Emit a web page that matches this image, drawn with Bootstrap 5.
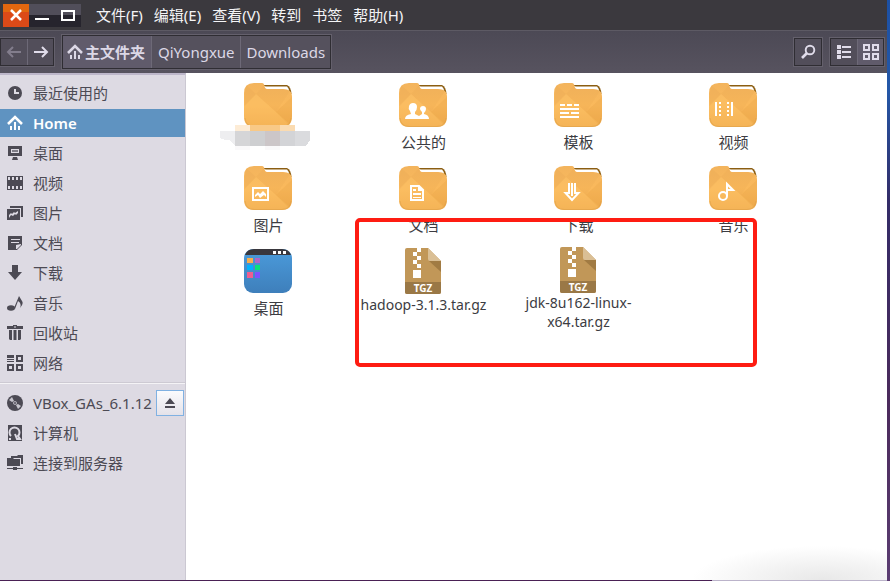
<!DOCTYPE html>
<html lang="zh-CN">
<head>
<meta charset="utf-8">
<meta name="viewport" content="width=device-width, initial-scale=1">
<title>Downloads</title>
<link href="https://cdn.jsdelivr.net/npm/bootstrap@5.3.0/dist/css/bootstrap.min.css" rel="stylesheet">
<style>
body{font-family:"Noto Sans","Noto Sans CJK SC",sans-serif;font-size:15px;line-height:20px;color:#3c3c42;background:linear-gradient(#1c50a4 0,#2458a8 90px,#332c68 200px,#4b2a5c 400px,#5b3d72 100%)}
svg{display:block;flex:none}
button{font-size:15px}
.file-window{margin-right:3px;background:#fff;position:relative}
.menu-strip{height:30px;background:#3b393e;padding-left:3px}
.win-btns{height:23px;background:linear-gradient(#514e5a 50%,#26242d 50%)}
.win-btn{width:26px;border:0;padding:0;background:none;color:#fff}
.win-close{background:linear-gradient(#e2670f 35%,#dc4a18 35%)}
.menu-links{gap:11px;margin-left:15px}
.menu-links a{color:#f4f4f6;text-decoration:none}
.tool-strip{height:43px;background:linear-gradient(#4c4955,#57535f);border-top:1px solid #5d5a64;padding-right:3px}
.tool-group{border:1px solid #2f2d33;outline:1px solid #64606c;height:28px}
.tool-btn{width:26px;border:0;padding:0;background:#524e5a;color:#e0dcea;display:flex;align-items:center;justify-content:center}
.tool-btn+.tool-btn,.path-btn+.path-btn{border-left:1px solid #6d6977}
.tool-btn:disabled{color:#827d8c}
.tool-btn.tool-on{background:#605b6b}
.path-group{height:34px;margin-left:8px}
.path-btn{border:0;padding:0 5px 0 6px;background:#55515d;color:#dcd8e6}
.path-btn.tool-on{background:#605b6b;padding:0 6px 0 4px;gap:2px}
.side-pane{width:186px;background:#dddae3;border-right:1px solid #cbc8d2;border-top:2px solid #bdb7ca;padding-top:4px}
.place-row{height:28px;margin-bottom:2px;padding-left:7px;gap:10px;color:#4c4a54;text-decoration:none;white-space:nowrap}
.place-on{background:#5f93c1;color:#fff;font-weight:600}
.place-cut{border-top:1px solid #cdcad3;border-bottom:1px solid #f4f3f6;margin:5px 0}
.volume-link{flex:1 1 0;min-width:0}
.eject-btn{flex:none;width:28px;height:26px;border:1px solid #80b1e2;background:linear-gradient(#fbfbfd,#e4e2e9);color:#4c4a54;padding:0 7px;margin-left:-10px;margin-right:1px}
.files-pane{padding:8px 0 0 4px;background:radial-gradient(ellipse 130px 34px at calc(100% - 65px) 100%,#e8e8e8 0,#f2f2f2 45%,#ffffff00 100%),#fff;overflow:hidden}
.file-grid{display:grid;grid-template-columns:repeat(auto-fill,155px);grid-auto-rows:83px}
.file-tile{color:#3c3c42;text-decoration:none;text-align:center;line-height:17px;display:flex;flex-direction:column;align-items:center;position:relative}
.tile-art{height:48px;display:flex;align-items:center}
.tile-name{margin-top:5px;padding-left:2px}
.archive-tile .tile-name{margin-top:0;max-width:142px;font-size:14px;line-height:19px}
.mosaic{position:absolute;left:30px;top:43px}
.bottom-edge{height:1px;background:linear-gradient(90deg,#4a2155 80.3%,#bbb3ca 80.3%)}
.red-frame{position:absolute;left:355px;top:218px;width:402px;height:149px;border:4px solid #fe1c12;border-radius:5px;pointer-events:none}
</style>
<script src="https://cdn.jsdelivr.net/npm/bootstrap@5.3.0/dist/js/bootstrap.bundle.min.js"></script>
</head>
<body>
<svg width="0" height="0" class="position-absolute" aria-hidden="true">
<defs>
<linearGradient id="gFolder" x2="0" y2="1"><stop stop-color="#f3b45d"/><stop offset=".5" stop-color="#fab95c"/><stop offset="1" stop-color="#f0ab4c"/></linearGradient>
<linearGradient id="gDesk" x2="0" y2="1"><stop stop-color="#4b9bdb"/><stop offset="1" stop-color="#3e7fbb"/></linearGradient>
</defs>
<symbol id="folder" viewBox="0 0 48 44">
<path d="M19 2H43Q47 4 47.500 11L30 10Z" fill="#8c5e12"/><path d="M20 3.500H43Q45 5 45 9L22 8Z" fill="#fff"/>
<path d="M0 10Q0 0 10 0H18Q20 0 20.500 3Q21 6 23 6H39Q48 6 48 13V33Q48 44 38 44H10Q0 44 0 33Z" fill="url(#gFolder)"/>
<path d="M12 11L1 23Q0 5 3 3Z" fill="#e9a956" opacity=".35"/><path d="M12 11L20 2Q21 6 23 6H39L46 8L32 29Z" fill="#e7a54f" opacity=".2"/><path d="M12 11L32 29L46 41Q43 44 38 44H10Q0 44 0 33V23Z" fill="#ffc66d" opacity=".32"/><path d="M32 29L48 14V33Q48 39 45 42Z" fill="#e59f42" opacity=".25"/>
<path d="M1 35Q2 43.500 10 43.500H38Q46 43.500 47 35" fill="none" stroke="#d99c46" opacity=".5"/>
</symbol>
<symbol id="tgz" viewBox="0 0 36 46">
<path d="M2 0H23L36 13V44Q36 46 34 46H2Q0 46 0 44V2Q0 0 2 0Z" fill="#c19758"/><path d="M23 0L36 13H25Q23 13 23 11Z" fill="#dabf95"/><path d="M24 13H36V24Z" fill="#a17b43"/><path d="M0 34H36V44Q36 46 34 46H2Q0 46 0 44Z" fill="#9a7846"/>
<path d="M12 0h4v4h-4zM8 4h4v4H8zM12 8h4v4h-4zM8 12h4v4H8zM12 16h4v4h-4zM8 22h8v8H8z" fill="#fff"/>
</symbol>
<symbol id="house" viewBox="0 0 16 16"><path d="M1 9L8 2L15 9" fill="none" stroke="currentColor" stroke-width="2.600"/><path d="M3 11h2v4H3zM7 7h2v8H7zM11 11h2v4h-2z" fill="currentColor"/></symbol>
</svg>

<div class="file-window d-flex flex-column min-vh-100">
<header class="menu-strip d-flex align-items-center">
<div class="win-btns d-flex">
<button class="win-btn win-close" aria-label="关闭"><svg width="26" height="22" viewBox="0 0 26 22"><path d="M8 6L18 16M18 6L8 16" stroke="#fff" stroke-width="2.500"/></svg></button>
<button class="win-btn" aria-label="最小化"><svg width="26" height="22"><path d="M6 15H20" stroke="#fff" stroke-width="2"/></svg></button>
<button class="win-btn" aria-label="最大化"><svg width="26" height="22"><path d="M7 7H19V16H7Z" fill="none" stroke="#fff" stroke-width="2"/></svg></button>
</div>
<nav class="menu-links d-flex"><a href="#">文件(F)</a><a href="#">编辑(E)</a><a href="#">查看(V)</a><a href="#">转到</a><a href="#">书签</a><a href="#">帮助(H)</a></nav>
</header>

<div class="tool-strip d-flex align-items-center">
<div class="tool-group d-flex">
<button class="tool-btn" disabled aria-label="后退"><svg width="16" height="16" viewBox="0 0 16 16"><path d="M15 8H2M7 3L2 8L7 13" fill="none" stroke="currentColor" stroke-width="2"/></svg></button>
<button class="tool-btn" aria-label="前进"><svg width="16" height="16" viewBox="0 0 16 16"><path d="M1 8H14M9 3L14 8L9 13" fill="none" stroke="currentColor" stroke-width="2"/></svg></button>
</div>
<div class="tool-group path-group d-flex">
<button class="path-btn tool-on d-flex align-items-center fw-bold"><svg width="16" height="16"><use href="#house"/></svg>主文件夹</button>
<button class="path-btn">QiYongxue</button>
<button class="path-btn">Downloads</button>
</div>
<div class="tool-group d-flex ms-auto me-2"><button class="tool-btn" aria-label="搜索"><svg width="16" height="16" viewBox="0 0 16 16"><circle cx="10" cy="6" r="4.300" fill="none" stroke="currentColor" stroke-width="1.900"/><path d="M7 9L2 14" stroke="currentColor" stroke-width="2.600"/></svg></button></div>
<div class="tool-group d-flex">
<button class="tool-btn" aria-label="列表视图"><svg width="16" height="16" viewBox="0 0 16 16" fill="currentColor"><path d="M1 1h4v4H1zM1 6h4v4H1zM1 11h4v4H1zM6 2h9v2H6zM6 7h9v2H6zM6 12h9v2H6z"/></svg></button>
<button class="tool-btn tool-on" aria-label="图标视图"><svg width="16" height="16" fill="none" stroke="currentColor" stroke-width="2"><path d="M1 1h5v5H1zM10 1h5v5h-5zM1 10h5v5H1zM10 10h5v5h-5z"/></svg></button>
</div>
</div>

<main class="d-flex flex-grow-1">
<aside class="side-pane flex-shrink-0">
<a href="#" class="place-row d-flex align-items-center"><svg width="16" height="16"><circle cx="8" cy="8" r="7" fill="currentColor"/><path d="M8 4V8H12" fill="none" stroke="#dddae3" stroke-width="2"/></svg>最近使用的</a>
<a href="#" class="place-row place-on d-flex align-items-center"><svg width="16" height="16"><use href="#house"/></svg>Home</a>
<a href="#" class="place-row d-flex align-items-center"><svg width="16" height="16" fill="currentColor"><path fill-rule="evenodd" d="M1 1H15V11H1ZM4 4V8H12V4ZM6 12H10L11 15H5Z"/><path d="M5 5h6v2H5z" opacity=".65"/></svg>桌面</a>
<a href="#" class="place-row d-flex align-items-center"><svg width="16" height="16"><path d="M0 1H16V15H0Z" fill="currentColor"/><path d="M1 2h2v3H1zM5 2h2v3H5zM9 2h2v3H9zM13 2h2v3h-2zM1 11h2v3H1zM5 11h2v3H5zM9 11h2v3H9zM13 11h2v3h-2z" fill="#dddae3"/></svg>视频</a>
<a href="#" class="place-row d-flex align-items-center"><svg width="16" height="16"><path d="M3 1H16V12H14V3H3Z" fill="currentColor"/><path d="M0 4H13V15H0Z" fill="currentColor"/><path d="M2 13V10L4 8L5 9L7 7L8 8L11 6V8L9 10L8 9L6 11L4 10Z" fill="#dddae3"/></svg>图片</a>
<a href="#" class="place-row d-flex align-items-center"><svg width="16" height="16"><path d="M1 1H15V10L10 15H1Z" fill="currentColor"/><path d="M4 4h9v1H4zM4 7h8v1H4zM9 14V10L14 9V10L10 14Z" fill="#dddae3"/></svg>文档</a>
<a href="#" class="place-row d-flex align-items-center"><svg width="16" height="16"><path d="M5 0H11V7H15L8 15L1 7H5Z" fill="currentColor"/></svg>下载</a>
<a href="#" class="place-row d-flex align-items-center"><svg width="16" height="16"><ellipse cx="4" cy="13" rx="4" ry="2.800" fill="currentColor"/><path d="M7 13L12 1L15 6Q17 9 13 13Q15 8 11 6L8 14Z" fill="currentColor"/></svg>音乐</a>
<a href="#" class="place-row d-flex align-items-center"><svg width="16" height="16" fill="currentColor"><path fill-rule="evenodd" d="M0 1H6V0H10V1H16V4H0ZM7 1.500V2.500H9V1.500ZM2 5h3v10H3L2 14ZM6.500 5h3v10h-3zM11 5h3v9l-1 1h-2z"/></svg>回收站</a>
<a href="#" class="place-row d-flex align-items-center"><svg width="16" height="16" fill="currentColor"><path fill-rule="evenodd" d="M0 0h7v3H0zM0 4h7v1H0zM0 6h7v1H0zM9 0h7v7H9zM11 2v3h3V2zM0 9h7v7H0zM2 11v3h3v-3zM9 9h7v7H9zM11 11v3h3v-3z"/></svg>网络</a>
<div class="place-cut"></div>
<div class="place-row d-flex align-items-center"><svg width="16" height="16"><circle cx="8" cy="8" r="8" fill="currentColor"/><path d="M2 5L5 2L7 6L5 7ZM14 11L11 14L9 10L11 9Z" fill="#dddae3" opacity=".85"/><circle cx="8" cy="8" r="1.800" fill="#dddae3"/><circle cx="8" cy="8" r="1" fill="currentColor"/></svg><a href="#" class="volume-link text-reset text-decoration-none">VBox_GAs_6.1.12</a><button class="eject-btn" aria-label="弹出"><svg width="12" height="12" viewBox="0 0 12 12" fill="currentColor"><path d="M6 1L11 7H1ZM1 9h10v2H1z"/></svg></button></div>
<a href="#" class="place-row d-flex align-items-center"><svg width="16" height="16"><path d="M1 0H15V16H1Z" fill="currentColor"/><path d="M4 11A5 5 0 1 1 11 11L13 14H10L8 9" fill="none" stroke="#dddae3" stroke-width="2"/><path d="M2 13h2v2H2z" fill="#dddae3"/></svg>计算机</a>
<a href="#" class="place-row d-flex align-items-center"><svg width="16" height="16" fill="currentColor"><path d="M4 1H10L11 0H16V9H14V3H4ZM0 3H6L7 4H13V11H0ZM0 13H6V12H10V13H16V14H10V15H6V14H0Z"/></svg>连接到服务器</a>
</aside>

<section class="files-pane flex-grow-1">
<div class="file-grid">
<a href="#" class="file-tile" aria-label="文件夹"><span class="tile-art"><svg width="48" height="44"><use href="#folder"/></svg></span>
<svg class="mosaic" width="90" height="26" shape-rendering="crispEdges"><path d="M15 1h15v6H15z" fill="#fdecd6"/><path d="M30 1h30v6H30z" fill="#f8c987"/><path d="M60 1h15v6H60z" fill="#fadbb1"/><path d="M0 7h15v15L10 16H5L0 14z" fill="#eeeef0"/><path d="M15 7h15v15H15z" fill="#d5d5d7"/><path d="M30 7h15v15H30z" fill="#cecfd1"/><path d="M45 7h15v15H45z" fill="#ccc6c8"/><path d="M60 7h15v15H60z" fill="#d3d4d7"/><path d="M75 7h15v9l-4 6H75z" fill="#dadbde"/><path d="M15 22h15v4H15zM45 22h15v4H45z" fill="#faf9fa"/></svg></a>
<a href="#" class="file-tile"><span class="tile-art"><svg width="48" height="44"><use href="#folder"/><path d="M6 36Q6 32 12 31L11 28Q9 26 10 23Q11 20 14 20Q18 20 18 24Q18 27 16 29V31L20 33L23 31V29Q21 27 21 26Q21 23 24 23Q27 23 27 26Q27 28 25 30V31Q30 32 30 36Z" fill="#fff"/></svg></span><span class="tile-name">公共的</span></a>
<a href="#" class="file-tile"><span class="tile-art"><svg width="48" height="44"><use href="#folder"/><path d="M6 21h5v2H6zM13 21h5v2h-5zM20 21h5v2h-5zM6 25h19v2H6zM6 29h9v2H6zM17 29h8v2h-8zM6 33h19v2H6z" fill="#fff"/></svg></span><span class="tile-name">模板</span></a>
<a href="#" class="file-tile"><span class="tile-art"><svg width="48" height="44"><use href="#folder"/><path d="M6 19h2v14H6zM22 19h2v14h-2zM10 19h2v2h-2zM10 23h2v2h-2zM10 27h2v2h-2zM10 31h2v2h-2zM18 19h2v2h-2zM18 23h2v2h-2zM18 27h2v2h-2zM18 31h2v2h-2z" fill="#fff"/></svg></span><span class="tile-name">视频</span></a>

<a href="#" class="file-tile"><span class="tile-art"><svg width="48" height="44"><use href="#folder"/><path d="M9 22H24V34H9Z" fill="none" stroke="#fff" stroke-width="2"/><path d="M11 31V29L14 26L16 28L19 25L22 28V31L20 29L16 32L14 29Z" fill="#fff"/></svg></span><span class="tile-name">图片</span></a>
<a href="#" class="file-tile"><span class="tile-art"><svg width="48" height="44"><use href="#folder"/><path d="M12 20H20L24 24V34H12Z" fill="none" stroke="#fff" stroke-width="2"/><path d="M19 19V25H25ZM14 23h3v2h-3zM14 27h8v2h-8zM14 31h8v1h-8z" fill="#fff"/></svg></span><span class="tile-name">文档</span></a>
<a href="#" class="file-tile"><span class="tile-art"><svg width="48" height="44"><use href="#folder"/><path d="M14 17h2v11h-2zM17 17h2v13h-2zM20 17h2v11h-2z" fill="#fff"/><path d="M16 27H11.500L18 34L24.500 27H20" fill="none" stroke="#fff" stroke-width="2"/></svg></span><span class="tile-name">下载</span></a>
<a href="#" class="file-tile"><span class="tile-art"><svg width="48" height="44"><use href="#folder"/><g fill="none" stroke="#fff" stroke-width="2"><circle cx="14" cy="30" r="4"/><path d="M18 30V18L24 24H18"/></g></svg></span><span class="tile-name">音乐</span></a>

<a href="#" class="file-tile"><span class="tile-art"><svg width="48" height="44"><rect width="48" height="44" rx="9" fill="url(#gDesk)"/><path d="M1 6Q3 0 10 0H38Q45 0 47 6Z" fill="#39373d"/><path d="M29 2h3v3h-3zM34 2h3v3h-3zM39 2h3v3h-3z" fill="#fff"/><path d="M3 9h6v5H3z" fill="#f9ae4b"/><path d="M11 9h5v5h-5z" fill="#b065c9"/><path d="M3 16h6v5H3z" fill="#00b3ff"/><path d="M11 16h5v5h-5z" fill="#08e37b"/><path d="M3 23h6v6H3z" fill="#ee5d91"/><path d="M11 23h5v6h-5z" fill="#7b52ff"/></svg></span><span class="tile-name">桌面</span></a>
<a href="#" class="file-tile archive-tile"><span class="tile-art"><svg width="36" height="46"><use href="#tgz"/><text x="18" y="44" text-anchor="middle" font-size="10" font-weight="700" fill="#fff">TGZ</text></svg></span><span class="tile-name">hadoop-3.1.3.tar.gz</span></a>
<a href="#" class="file-tile archive-tile"><span class="tile-art"><svg width="36" height="46"><use href="#tgz"/><text x="18" y="44" text-anchor="middle" font-size="10" font-weight="700" fill="#fff">TGZ</text></svg></span><span class="tile-name">jdk-8u162-linux-<wbr>x64.tar.gz</span></a>
</div>
</section>
</main>
<div class="bottom-edge"></div>
<div class="red-frame"></div>
</div>
</body>
</html>
